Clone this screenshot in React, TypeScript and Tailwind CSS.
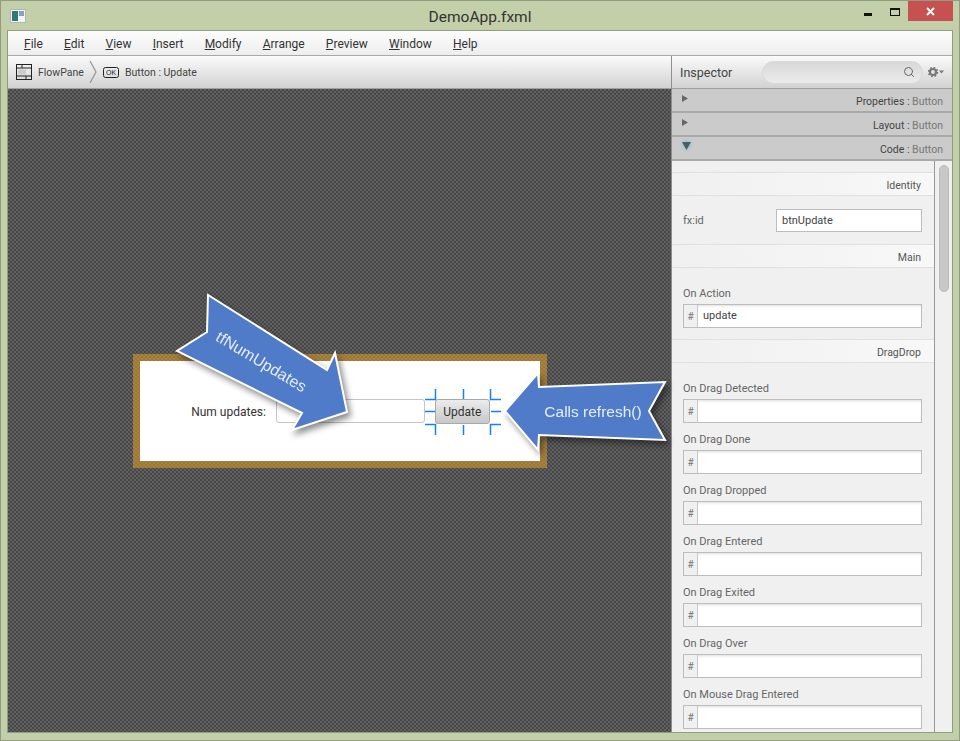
import { Search } from "lucide-react";

const uiFont = "font-['Roboto','Noto_Sans',sans-serif]";

const menuItems = ["File", "Edit", "View", "Insert", "Modify", "Arrange", "Preview", "Window", "Help"];
const dragRows = ["On Drag Detected", "On Drag Done", "On Drag Dropped", "On Drag Entered", "On Drag Exited", "On Drag Over", "On Mouse Drag Entered"];

function SectionHeader({ title }: { title: string }) {
  return (
    <div className="h-6 border-y border-[#e0e0e0] bg-gradient-to-r from-[#f0f0f0] to-[#f8f8f8] pr-[13px] pt-[3px] flex items-center justify-end text-[10.5px] text-[#555]">
      {title}
    </div>
  );
}

function HashField({ label, value }: { label: string; value?: string }) {
  return (
    <div className="h-[51px] pl-[11px] pr-[12px] flex flex-col justify-end">
      <div className="h-[17px] text-[11px] leading-[14px] text-[#666]">{label}</div>
      <div className="h-[24px] flex border border-[#bdbdbd] bg-white shrink-0">
        <div className="w-[14px] bg-[#f0f0f0] border-r border-[#c8c8c8] text-[10px] text-[#777] flex items-center justify-center">#</div>
        <div className="flex-1 pl-[5px] text-[11px] leading-[22px] text-[#444] shadow-[inset_0_3px_3px_-2px_#ddd]">{value}</div>
      </div>
    </div>
  );
}

function AccordionRow({ name, open }: { name: string; open?: boolean }) {
  return (
    <div className="h-6 bg-[#cbcbcb] border-b-2 border-[#a9a9a9] pl-[10px] pr-[9px] flex items-center justify-between text-[10.5px]">
      {open ? (
        <svg width="10" height="9" viewBox="0 0 10 9" className="drop-shadow-[0_0_2px_#4fc3e8] -mt-1">
          <path d="M0 0H9L4.5 8Z" fill="#4f5b60" />
        </svg>
      ) : (
        <svg width="6" height="7" viewBox="0 0 6 7" className="-mt-1">
          <path d="M0 0L6 3.5L0 7Z" fill="#666" />
        </svg>
      )}
      <span className="text-[#444] pt-[4px]">
        {name} : <span className="text-[#777]">Button</span>
      </span>
    </div>
  );
}

function SelectionHandles() {
  const lines = [
    "M10.5 0V10.5H0", "M38.5 0V10", "M65.5 0V10.5H76", "M0 22.5H10", "M66 22.5H76", "M0 35.5H10.5V46", "M38.5 36V46", "M76 35.5H65.5V46",
  ];
  return (
    <svg width="76" height="46" viewBox="0 0 76 46" className="absolute -left-[11px] -top-[11px]" fill="none" stroke="#1a7ff5" strokeWidth="1.5">
      {lines.map((d) => (
        <path key={d} d={d} />
      ))}
    </svg>
  );
}

export default function App() {
  return (
    <div className={`relative w-[960px] h-[741px] overflow-hidden bg-[#c3cfa9] border border-[#919c82] flex flex-col ${uiFont}`}>
      {/* title bar */}
      <div className="h-[29px] shrink-0 flex items-start relative">
        <svg width="16" height="14" viewBox="0 0 16 14" className="mt-[8px] ml-[9px]">
          <rect x="0.5" y="0.5" width="15" height="13" fill="#f4f4f4" stroke="#b5b5b5" />
          <rect x="2" y="2" width="6" height="10" fill="#2b7a78" />
          <rect x="9" y="2" width="5" height="5" fill="#8aa0c0" />
        </svg>
        <div className="absolute inset-x-0 top-[6px] text-center text-[15.5px] leading-[20px] text-[#333]">DemoApp.fxml</div>
        <div className="ml-auto mr-[6px] flex items-start">
          <div className="w-[27px] h-[20px] flex justify-center">
            <div className="w-2 h-[3px] bg-[#111] mt-[12px]" />
          </div>
          <div className="w-[27px] h-[20px] flex justify-center">
            <div className="w-[10px] h-2 border border-t-2 border-[#111] mt-[7px]" />
          </div>
          <div className="w-[45px] h-[20px] bg-[#c75050] flex items-center justify-center">
            <svg width="9" height="9" viewBox="0 0 9 9" stroke="#fff" strokeWidth="2">
              <path d="M1 1L8 8M8 1L1 8" />
            </svg>
          </div>
        </div>
      </div>

      {/* window body */}
      <div className="mx-[6px] flex-1 min-h-0 flex flex-col border border-[#919c82] bg-[#f0f0f0]">
        <div className="h-[25px] shrink-0 bg-gradient-to-b from-[#fdfdfd] to-[#ededed] border-b border-[#a8a8a8] pl-[16px] pt-[2px] flex items-center gap-[21.2px] text-[12px] text-[#333]">
          {menuItems.map((m) => (
            <span key={m}>
              <span className="underline">{m[0]}</span>
              {m.slice(1)}
            </span>
          ))}
        </div>

        <div className="flex-1 min-h-0 flex">
          {/* left column */}
          <div className="w-[663px] shrink-0 flex flex-col">
            <div className="h-[33px] shrink-0 bg-gradient-to-b from-[#fbfbfb] to-[#d2d2d2] border-b border-[#a0a0a0] pl-[8px] flex items-center text-[10.5px] text-[#444]">
              <svg width="16" height="16" viewBox="0 0 16 16" fill="none" stroke="#222">
                <rect x="0.5" y="0.5" width="15" height="15" />
                <path d="M0.5 4H15.5M0.5 12H15.5M10 12V15.5M6 0.5V4" />
                <rect x="2" y="5.5" width="8" height="5" fill="#ccc" stroke="none" />
              </svg>
              <span className="ml-[6px] pt-[2px]">FlowPane</span>
              <svg width="8" height="22" viewBox="0 0 8 22" fill="none" stroke="#999" strokeWidth="1.3" className="ml-[5px]">
                <path d="M1 0L7 11L1 22" />
              </svg>
              <svg width="16" height="11" viewBox="0 0 16 11" fill="none" stroke="#222" className="ml-[6px]">
                <rect x="0.5" y="0.5" width="15" height="10" rx="2" />
                <text x="8" y="8" textAnchor="middle" fontSize="7" fill="#222" stroke="none" fontFamily="Liberation Sans">OK</text>
              </svg>
              <span className="ml-[6px] pt-[2px]">Button : Update</span>
            </div>

            {/* canvas */}
            <div className="flex-1 min-h-0 flex items-center justify-center bg-[repeating-conic-gradient(#474747_0_25%,#616161_0_50%)] bg-[length:4px_4px]">
              <div className="w-[414px] h-[114px] p-[7px] bg-[repeating-conic-gradient(#9c7838_0_25%,#a88340_0_50%)] bg-[length:4px_4px]">
                <div className="h-full bg-white flex items-start justify-center gap-[10px] pl-[2px] pt-[38px] text-[12px] text-[#333]">
                  <span className="leading-[26px]">Num updates:</span>
                  <div className="w-[149px] h-[24px] bg-white border border-[#c4c4c4] rounded-[3px]" />
                  <div className="relative w-[55px] h-[25px] rounded-[3px] border border-[#a8a8a8] bg-gradient-to-b from-[#ececec] to-[#c8c8c8] pt-[1px] flex items-center justify-center text-[12px]">
                    Update
                    <SelectionHandles />
                  </div>
                </div>
              </div>
            </div>
          </div>

          {/* inspector */}
          <div className="flex-1 min-w-0 flex flex-col border-l border-[#8f8f8f]">
            <div className="h-[33px] shrink-0 bg-gradient-to-b from-[#fbfbfb] to-[#d2d2d2] border-b border-[#a0a0a0] pl-[8px] pr-[7px] flex items-center text-[12.5px] text-[#444]">
              <span className="pt-[2px]">Inspector</span>
              <div className="ml-auto w-[161px] h-[23px] rounded-full border border-[#d8d8d8] bg-gradient-to-b from-[#d8d8d8] to-[#ececec] flex items-center justify-end pr-[7px]">
                <Search className="w-[12px] h-[12px] text-[#666]" strokeWidth={2} />
              </div>
              <svg width="17" height="10" viewBox="0 0 17 10" className="ml-[5px]">
                <circle cx="5" cy="5" r="3" fill="none" stroke="#777" strokeWidth="2.2" />
                <circle cx="5" cy="5" r="4.6" fill="none" stroke="#777" strokeWidth="1.4" strokeDasharray="1.8 1.8" />
                <path d="M11 3.5H16L13.5 6.5Z" fill="#777" />
              </svg>
            </div>
            <AccordionRow name="Properties" />
            <AccordionRow name="Layout" />
            <AccordionRow name="Code" open />

            <div className="flex-1 min-h-0 flex overflow-hidden">
              <div className="flex-1 min-w-0 pt-[11px]">
                <SectionHeader title="Identity" />
                <div className="h-[48px] pl-[11px] pr-[12px] pt-[1px] flex items-center justify-between text-[11px] text-[#666]">
                  <span className="pt-[1px]">fx:id</span>
                  <div className="w-[146px] h-[23px] bg-white border border-[#bdbdbd] pl-[5px] leading-[21px] text-[#444]">btnUpdate</div>
                </div>
                <SectionHeader title="Main" />
                <div className="pt-[9px] pb-[11px]">
                  <HashField label="On Action" value="update" />
                </div>
                <SectionHeader title="DragDrop" />
                <div className="pt-[9px]">
                  {dragRows.map((r) => (
                    <HashField key={r} label={r} />
                  ))}
                </div>
              </div>
              <div className="w-[18px] shrink-0 border-l border-[#999] pt-[4px] flex justify-center">
                <div className="w-[10px] h-[127px] rounded-full bg-[#c8c8c8] border border-[#bbb]" />
              </div>
            </div>
          </div>
        </div>
      </div>
      <div className="h-[7px] shrink-0" />

      {/* annotation arrows drawn on top of the screenshot */}
      <svg width="960" height="741" viewBox="0 0 960 741" className="absolute -left-px -top-px pointer-events-none drop-shadow-[3px_4px_3px_rgba(0,0,0,0.45)]">
        <polygon points="208,295 207,332 177,351 302,413 292,430 347,412 335,353 327,370" fill="#4f7bc9" stroke="#fff" strokeWidth="2" />
        <polygon points="505,411 538,373 539,387 665,382 649,411 665,440 539,435 538,450" fill="#4f7bc9" stroke="#fff" strokeWidth="2" />
        <text x="261" y="367" textAnchor="middle" fontSize="16" fill="#e6edf8" fontFamily="Liberation Sans" transform="rotate(31 261 362)">tfNumUpdates</text>
        <text x="593" y="417" textAnchor="middle" fontSize="15.5" fill="#e6edf8" fontFamily="Liberation Sans">Calls refresh()</text>
      </svg>
    </div>
  );
}
